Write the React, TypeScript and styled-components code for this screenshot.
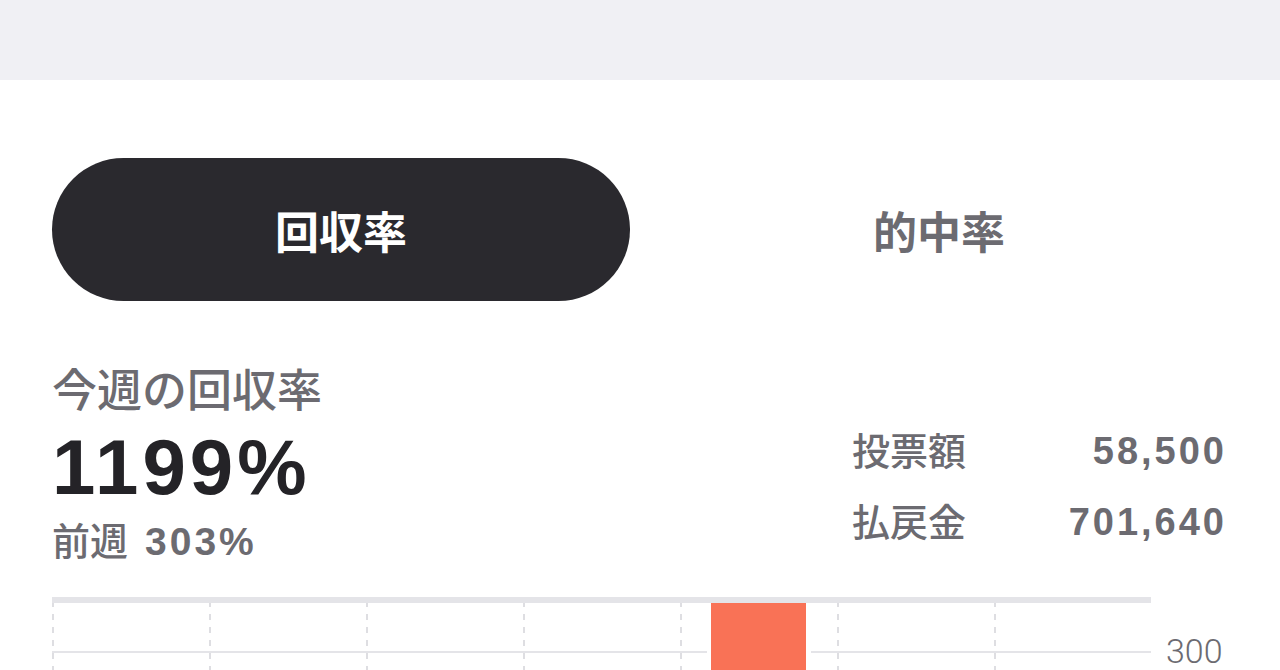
import React from "react";
import styled, { createGlobalStyle } from "styled-components";

const Global = createGlobalStyle`
  html, body { margin: 0; padding: 0; background: #ffffff; overflow: hidden; }
  body { font-family: "Liberation Sans", "Noto Sans CJK JP", sans-serif; -webkit-font-smoothing: antialiased; }
`;

const Page = styled.div`
  width: 1280px;
  min-height: 670px;
  display: flex;
  flex-direction: column;
`;

const TopBar = styled.div`
  height: 80px;
  background: #f0f0f4;
  flex-shrink: 0;
`;

const Content = styled.div`
  padding: 78px 52px 0;
  display: flex;
  flex-direction: column;
`;

const Tabs = styled.div`
  display: grid;
  grid-template-columns: 1fr 1fr;
  gap: 20px;
  height: 143px;
`;

const Tab = styled.button<{ $active?: boolean }>`
  border: none;
  margin: 0;
  padding: 0;
  border-radius: 72px;
  background: ${(p) => (p.$active ? "#2a292e" : "transparent")};
  color: ${(p) => (p.$active ? "#ffffff" : "#6c6b71")};
  font-family: "Noto Sans CJK JP", sans-serif;
  font-size: 44px;
  font-weight: 700;
  letter-spacing: 0;
  display: flex;
  align-items: center;
  justify-content: center;
`;

const Stats = styled.div`
  display: flex;
  justify-content: space-between;
  align-items: flex-start;
  margin-top: 58px;
`;

const Left = styled.div`
  display: flex;
  flex-direction: column;
`;

const Title = styled.div`
  font-family: "Noto Sans CJK JP", sans-serif;
  font-size: 45px;
  font-weight: 500;
  color: #6c6b71;
  line-height: 58px;
`;

const Big = styled.div`
  font-family: "Liberation Sans", sans-serif;
  font-size: 78px;
  font-weight: 700;
  color: #242327;
  line-height: 100px;
  letter-spacing: 4px;
`;

const Prev = styled.div`
  font-family: "Liberation Sans", "Noto Sans CJK JP", sans-serif;
  font-size: 39px;
  font-weight: 700;
  color: #6c6b71;
  line-height: 44px;
  letter-spacing: 3px;
  display: flex;
  gap: 17px;
  align-items: baseline;
`;

const PrevLabel = styled.span`
  font-family: "Noto Sans CJK JP", sans-serif;
  font-size: 38px;
  font-weight: 500;
  letter-spacing: 0;
`;

const Right = styled.div`
  width: 376px;
  margin-top: 64px;
  display: grid;
  grid-template-columns: auto 1fr;
  row-gap: 17px;
`;

const Label = styled.div`
  font-family: "Noto Sans CJK JP", sans-serif;
  font-size: 38px;
  font-weight: 500;
  color: #6c6b71;
  line-height: 51px;
`;

const Value = styled.div`
  font-family: "Liberation Sans", sans-serif;
  font-size: 38px;
  font-weight: 700;
  color: #6c6b71;
  line-height: 51px;
  text-align: right;
  padding-right: 1px;
  padding-top: 3px;
  letter-spacing: 3px;
`;

const Chart = styled.svg`
  display: block;
  margin-top: 29px;
  width: 1176px;
  height: 200px;
`;

const xs = [0, 157, 314, 471, 628, 785, 942];

export default function App() {
  return (
    <Page>
      <Global />
      <TopBar />
      <Content>
        <Tabs>
          <Tab $active>回収率</Tab>
          <Tab>的中率</Tab>
        </Tabs>
        <Stats>
          <Left>
            <Title>今週の回収率</Title>
            <Big>1199%</Big>
            <Prev>
              <PrevLabel>前週</PrevLabel>
              <span>303%</span>
            </Prev>
          </Left>
          <Right>
            <Label>投票額</Label>
            <Value>58,500</Value>
            <Label>払戻金</Label>
            <Value>701,640</Value>
          </Right>
        </Stats>
        <Chart viewBox="0 0 1176 200">
          {xs.map((x) => (
            <line
              key={x}
              x1={x + 1}
              x2={x + 1}
              y1={8}
              y2={200}
              stroke="#dedee2"
              strokeWidth={2}
              strokeDasharray="6 7"
            />
          ))}
          <rect x={0} y={4} width={1099} height={6} fill="#e4e4e8" />
          <rect x={0} y={58} width={655} height={2} fill="#e4e4e8" />
          <rect x={759} y={58} width={340} height={2} fill="#e4e4e8" />
          <rect x={659} y={10} width={95} height={190} fill="#f97256" />
          <text
            x={1114}
            y={70}
            fontFamily="Roboto, sans-serif"
            fontWeight={300}
            fontSize={34}
            fill="#6c6b71"
          >
            300
          </text>
        </Chart>
      </Content>
    </Page>
  );
}
